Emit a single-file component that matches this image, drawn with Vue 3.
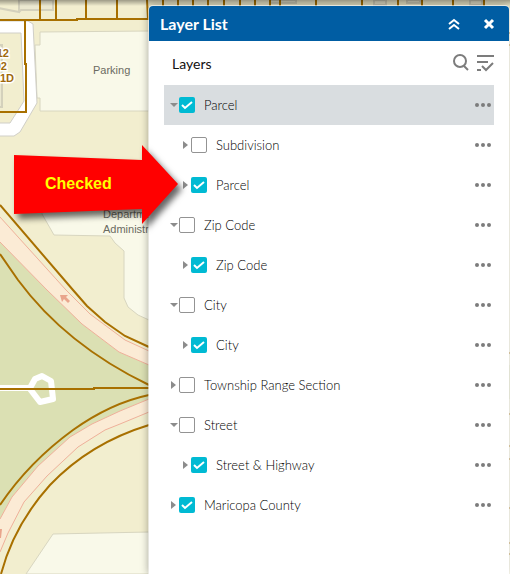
<script setup>
import { ref, reactive } from 'vue';

const collapsed = ref(false);
const visible = ref(true);

const layers = reactive([
  { id: 1, name: 'Parcel', level: 0, open: true, checked: true, selected: true },
  { id: 2, name: 'Subdivision', level: 1, open: false, checked: false },
  { id: 3, name: 'Parcel', level: 1, open: false, checked: true },
  { id: 4, name: 'Zip Code', level: 0, open: true, checked: false },
  { id: 5, name: 'Zip Code', level: 1, open: false, checked: true },
  { id: 6, name: 'City', level: 0, open: true, checked: false },
  { id: 7, name: 'City', level: 1, open: false, checked: true },
  { id: 8, name: 'Township Range Section', level: 0, open: false, checked: false },
  { id: 9, name: 'Street', level: 0, open: true, checked: false },
  { id: 10, name: 'Street & Highway', level: 1, open: false, checked: true },
  { id: 11, name: 'Maricopa County', level: 0, open: false, checked: true }
]);

function selectLayer(layer) {
  layers.forEach(item => item.selected = item.id === layer.id);
}
</script>

<template>
  <div class="viewer">
    <svg class="map" viewBox="0 0 510 574" preserveAspectRatio="xMinYMin slice" aria-hidden="true">
      <rect class="land" width="510" height="574" />

      <!-- park and ramps -->
      <path class="park" d="M0 242L47 290L82 324L119 352L149 365H510V399H149L120 411L92 424L70 437L38 466L12 497L0 519Z" />
      <path class="road" d="M0 217L66 290L90 314L125 340L149 351V365L119 352L82 324L47 290L0 242Z" />
      <path class="road" d="M149 399L120 411L92 424L70 437L38 466L12 497L0 519V552L8 533L24 502L47 476L78 447L105 430L120 424L149 412Z" />
      <path class="road-edge" d="M0 217L66 290L90 314L125 340L149 351M149 365L119 352L82 324L47 290L0 242" />
      <path class="road-edge" d="M149 399L120 411L92 424L70 437L38 466L12 497L0 519M0 552L8 533L24 502L47 476L78 447L105 430L120 424L149 412" />
      <path class="road-arrow" d="M60 295L68 295L66 297L70 301L68 303L64 299L62 302ZM0 529H2L1 538H0Z" />

      <!-- buildings -->
      <path class="building" d="M40 32L149 31V111H40V98H37L35 45H40Z" />
      <path class="building" d="M42 206V214L54 235L110 236L115 243L124 251V298L128 307L138 315L149 320V200Z" />
      <path class="building" d="M26 574L53 534L149 532V574Z" />
      <path class="block" d="M-2 8L19 12V0H53V10H21L19 12" />

      <!-- local street -->
      <path class="street" d="M-2 21H28L33 24L37 103L20 132L14 136H-2Z" />
      <path class="street-inner" d="M-2 33H21L24 101L10 123H-2Z" />
      <path class="block" d="M-2 45H2V107H-2" />
      <path class="lane" d="M0 388H30L35 379L42 376L51 381L53 399L40 402L30 389" />
      <path class="top-block" d="M270 0H296V3H270ZM374 0H386V5H374ZM407 0H420V3H407ZM470 0H482V5H470Z" />

      <!-- parcel lines -->
      <path class="parcel" d="M0 20H77V19H149M40 0V20M56 0V20M86 0V19M117 0V19M147 0L148 19" />
      <path class="parcel" d="M25 20V64H26V112H0" />
      <path class="parcel" d="M163 0V6M178 0V6M193 0V6M208 0V6M224 0V6M240 0V6M255 0V6M270 0V6M280 0V6M316 0V6M362 0V6M398 0V6M422 0V6M453 0V6M484 0V6" />
      <path class="parcel" d="M0 205L73 290L87 306L105 322L125 336L149 347" />
      <path class="parcel" d="M0 254L18 280Q66 345 149 385" />
      <path class="parcel" d="M0 389H94V388H149" />
      <path class="parcel" d="M149 395Q111 403 73 430Q29 462 0 505" />
      <path class="parcel" d="M149 425Q90 443 50 485Q14 525 1 574" />
      <path class="parcel" d="M508 33H510M508 45H510M508 353H510M508 414H510M508 446H510M508 459H510M508 508H510M508 543H510M508 554H510" />

      <text class="place" x="93" y="74">Parking</text>
      <text class="place" x="103" y="218">Department of</text>
      <text class="place" x="103" y="233">Administration</text>
      <text class="parcel-no" x="9" y="57">12</text>
      <text class="parcel-no" x="7" y="70">02</text>
      <text class="parcel-no" x="14" y="82">1D</text>
    </svg>
    <div class="top-shade"></div>

    <section v-if="visible" class="panel" :class="{ 'is-collapsed': collapsed }">
      <header class="panel-header">
        <h1>Layer List</h1>
        <button type="button" class="header-btn" aria-label="Collapse" @click="collapsed = !collapsed">
          <svg viewBox="0 0 14 14"><path d="M2 7L7 3L12 7M2 12L7 8L12 12" /></svg>
        </button>
        <button type="button" class="header-btn" aria-label="Close" @click="visible = false">
          <svg viewBox="0 0 14 14"><path class="cross" d="M3 3L11 11M11 3L3 11" /></svg>
        </button>
      </header>

      <div v-if="!collapsed" class="panel-body">
        <div class="toolbar">
          <h2>Layers</h2>
          <button type="button" class="tool-btn" aria-label="Search">
            <svg viewBox="0 0 18 18"><circle cx="8" cy="7" r="6" /><path d="M12 12L16 16" /></svg>
          </button>
          <button type="button" class="tool-btn" aria-label="Layer options">
            <svg viewBox="0 0 18 18"><path d="M1 2H18" /><path class="thin" d="M1 8H12M1 16H5M6 12L10 16L17 9" /></svg>
          </button>
        </div>

        <ul class="layer-list">
          <li
            v-for="layer in layers"
            :key="layer.id"
            class="layer-row"
            :class="{ child: layer.level === 1, selected: layer.selected }"
            @click="selectLayer(layer)"
          >
            <button type="button" class="toggle" :class="{ open: layer.open }" aria-label="Expand" @click.stop="layer.open = !layer.open"></button>
            <input type="checkbox" :id="'layer' + layer.id" v-model="layer.checked">
            <label :for="'layer' + layer.id">{{ layer.name }}</label>
            <button type="button" class="more" aria-label="More">
              <svg viewBox="0 0 16 4"><circle cx="2" cy="2" r="2" /><circle cx="8" cy="2" r="2" /><circle cx="14" cy="2" r="2" /></svg>
            </button>
          </li>
        </ul>
      </div>
    </section>

    <svg class="callout" viewBox="0 0 190 100">
      <path d="M14 15L142 20V5L178 44L142 84V69L14 74Z" />
      <text x="45" y="49">Checked</text>
    </svg>
  </div>
</template>

<style>
body {
  margin: 0;
}
</style>

<style scoped>
.viewer {
  position: relative;
  display: flex;
  box-sizing: border-box;
  min-height: 100vh;
  padding: 6px 1px 0 149px;
  overflow: hidden;
  font-family: Lato, "Open Sans", sans-serif;
}

.map {
  position: absolute;
  top: 0;
  left: 0;
  width: 100%;
  height: 100%;
}

.top-shade {
  position: absolute;
  top: 0;
  left: 0;
  right: 0;
  height: 6px;
  background: linear-gradient(rgba(0, 0, 0, 0.35), rgba(0, 0, 0, 0));
}

.land,
.street-inner {
  fill: #f2eecf;
}

.park {
  fill: #dbe0b3;
}

.road {
  fill: #fbebd5;
}

.road-edge {
  fill: none;
  stroke: #efb09a;
}

.road-arrow {
  fill: #e9a58c;
}

.building {
  fill: #f9f9e9;
  stroke: #d8d6c0;
}

.block,
.top-block {
  fill: #ebe8d0;
  stroke: #d4d1bc;
  stroke-width: 2;
}

.street {
  fill: #fff;
  stroke: #d0cfc8;
}

.street-inner {
  stroke: #d0cfc8;
}

.lane {
  fill: none;
  stroke: #fff;
  stroke-width: 6;
  stroke-linejoin: round;
}

.parcel {
  fill: none;
  stroke: #a87000;
  stroke-width: 2;
}

.place {
  font: 11px "Liberation Sans", Arial, sans-serif;
  fill: #6b6b62;
}

.parcel-no {
  font: bold 11px "Liberation Sans", Arial, sans-serif;
  fill: #a0690c;
  stroke: #fff;
  stroke-width: 3;
  paint-order: stroke;
  text-anchor: end;
}

.panel {
  position: relative;
  display: flex;
  flex: 1;
  flex-direction: column;
  min-width: 0;
  background: #fff;
  border-radius: 4px 4px 0 0;
  box-shadow: 0 0 0 1px rgba(255, 255, 255, 0.6), 0 0 8px rgba(0, 0, 0, 0.4);
}

.panel.is-collapsed {
  align-self: flex-start;
}

.panel-header {
  display: flex;
  align-items: center;
  height: 35px;
  padding: 0 13px 0 11px;
  gap: 21px;
  background: #005da3;
  border-radius: 4px 4px 0 0;
  color: #fff;
}

h1 {
  flex: 1;
  margin: 0;
  font-size: 16px;
  font-weight: 700;
}

button {
  padding: 0;
  border: none;
  background: none;
  cursor: pointer;
}

.header-btn {
  width: 14px;
  height: 14px;
}

button svg {
  display: block;
  width: 100%;
  height: 100%;
  fill: none;
}

.header-btn path {
  stroke: #fff;
  stroke-width: 2;
}

.header-btn .cross {
  stroke-width: 3;
}

.panel-body {
  padding: 0 15px;
}

.toolbar {
  display: flex;
  align-items: center;
  height: 44px;
  gap: 6px;
  padding-left: 8px;
}

h2 {
  flex: 1;
  margin: 0;
  font-size: 14px;
  font-weight: 400;
  color: #111;
}

.tool-btn {
  width: 18px;
  height: 18px;
}

.tool-btn svg {
  stroke: #7c7c7c;
  stroke-width: 2;
}

.layer-list {
  margin: 0;
  padding: 0;
  list-style: none;
}

.layer-row {
  display: flex;
  align-items: center;
  height: 40px;
  padding: 0 3px 0 5px;
}

.layer-row.child {
  padding-left: 17px;
}

.layer-row.selected {
  background: #d9dde0;
}

.toggle {
  width: 10px;
  height: 16px;
}

.toggle::before {
  content: "";
  display: block;
  width: 5px;
  height: 8px;
  margin-left: 2px;
  background: #8c8c8c;
  clip-path: polygon(0 0, 100% 50%, 0 100%);
}

.toggle.open::before {
  width: 8px;
  height: 4px;
  margin-left: 1px;
  clip-path: polygon(0 0, 100% 0, 50% 100%);
}

input {
  appearance: none;
  width: 16px;
  height: 16px;
  margin: 0 9px 0 0;
  border: 1px solid #939393;
  border-radius: 2px;
  background: #fff;
}

input:checked {
  border: none;
  background: #00bad3 url("data:image/svg+xml,%3Csvg xmlns='http://www.w3.org/2000/svg' viewBox='0 0 16 16'%3E%3Cpath d='M3 8L6 11L13 5' fill='none' stroke='white' stroke-width='2'/%3E%3C/svg%3E");
}

label {
  flex: 1;
  font-size: 13px;
  font-weight: 300;
  color: #000;
}

.more {
  width: 16px;
  height: 4px;
}

.more svg {
  fill: #7c7c7c;
}

.callout {
  position: absolute;
  top: 140px;
  left: 0;
  width: 190px;
  height: 100px;
  overflow: visible;
  pointer-events: none;
}

.callout path {
  fill: #f00;
  filter: drop-shadow(4px 5px 3px rgba(0, 0, 0, 0.6));
}

.callout text {
  font: bold 16px "Liberation Sans", Arial, sans-serif;
  fill: #ff0;
}
</style>
